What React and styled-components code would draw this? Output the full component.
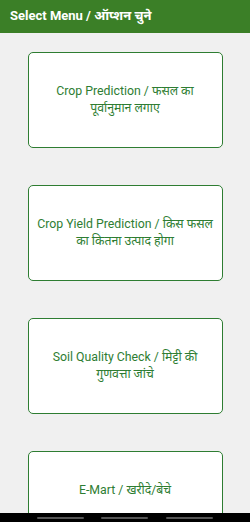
import styled, { createGlobalStyle } from "styled-components";

const GlobalStyle = createGlobalStyle`
  html, body {
    margin: 0;
    padding: 0;
    background: #f0f0f0;
  }
  body {
    font-family: Roboto, "Noto Sans Devanagari", "Noto Sans", sans-serif;
  }
`;

const Screen = styled.div`
  width: 250px;
  height: 522px;
  overflow: hidden;
  display: flex;
  flex-direction: column;
  background: #f0f0f0;
`;

const Header = styled.div`
  height: 33px;
  flex-shrink: 0;
  background: #3b7f27;
  color: #fff;
  display: flex;
  align-items: center;
  padding: 0 10px;
  font-size: 13px;
  font-weight: 700;
`;

const List = styled.div`
  flex: 1;
  overflow: hidden;
  display: flex;
  flex-direction: column;
  align-items: center;
  gap: 37px;
  padding-top: 19px;
`;

const Card = styled.div`
  width: 195px;
  flex-shrink: 0;
  box-sizing: border-box;
  background: #fff;
  border: 1px solid #2e7d32;
  border-radius: 5px;
  padding: 30px 8px;
  text-align: center;
  color: #2e7d32;
  font-size: 12.3px;
  line-height: 17px;
`;

const NavBar = styled.div`
  height: 9px;
  flex-shrink: 0;
  background: #000;
  display: flex;
  justify-content: space-around;
  align-items: center;
  padding: 0 28px;
`;

const NavLine = styled.span`
  width: 47px;
  height: 2px;
  border-radius: 1px;
  background: #555;
`;

const items = [
  "Crop Prediction / फसल का पूर्वानुमान लगाए",
  "Crop Yield Prediction / किस फसल का कितना उत्पाद होगा",
  "Soil Quality Check / मिट्टी की गुणवत्ता जांचे",
  "E-Mart / खरीदे/बेचे",
];

const App = () => {
  return (
    <Screen>
      <GlobalStyle />
      <Header>Select Menu / ऑप्शन चुने</Header>
      <List>
        {items.map((label) => (
          <Card key={label}>{label}</Card>
        ))}
      </List>
      <NavBar>
        <NavLine />
        <NavLine />
        <NavLine />
      </NavBar>
    </Screen>
  );
};

export default App;
